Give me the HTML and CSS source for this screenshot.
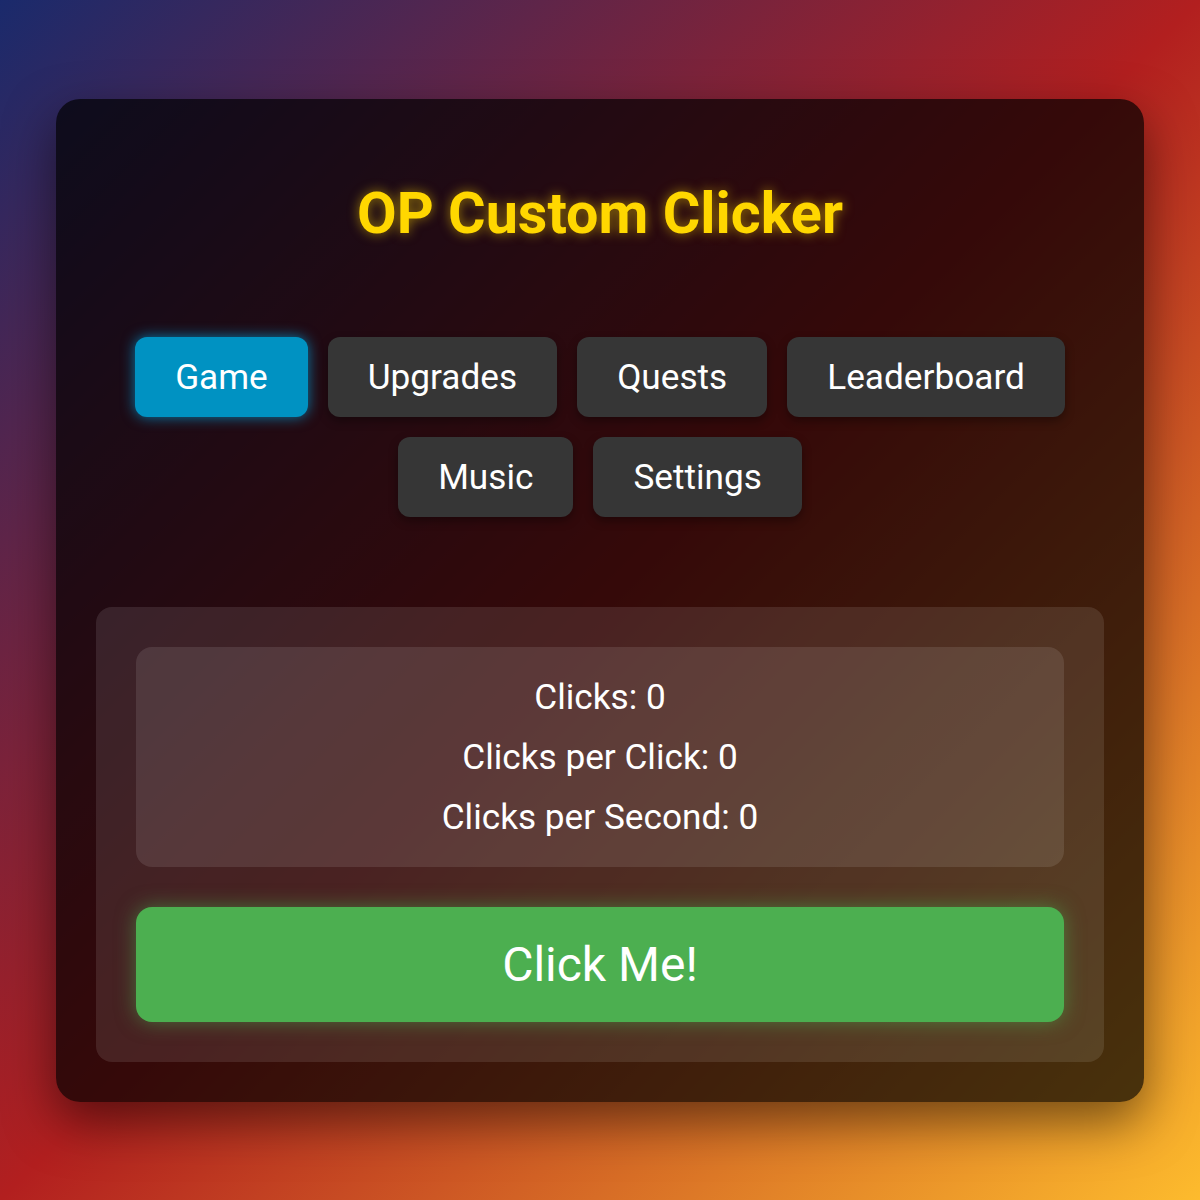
FILE: index.html
```html
<!DOCTYPE html>
<html lang="en">
<head>
<meta charset="utf-8">
<title>OP Custom Clicker</title>
<link rel="stylesheet" href="styles.css">
</head>
<body>
  <main class="card">
    <h1 class="title">OP Custom Clicker</h1>
    <nav class="tabs">
      <button class="tab active">Game</button>
      <button class="tab">Upgrades</button>
      <button class="tab">Quests</button>
      <button class="tab">Leaderboard</button>
      <button class="tab">Music</button>
      <button class="tab">Settings</button>
    </nav>
    <section class="panel">
      <div class="stats">
        <p class="stat">Clicks: 0</p>
        <p class="stat">Clicks per Click: 0</p>
        <p class="stat">Clicks per Second: 0</p>
      </div>
      <button class="click-btn">Click Me!</button>
    </section>
  </main>
</body>
</html>
```
FILE: styles.css
```css
* { box-sizing: border-box; }
html, body { height: 100%; }
body {
  margin: 0;
  min-height: 1200px;
  font-family: Roboto, "Liberation Sans", sans-serif;
  color: #fff;
  background: linear-gradient(135deg, #1a2a6c 0%, #b21f1f 50%, #fdbb2d 100%);
  display: flex;
  align-items: center;
  justify-content: center;
}
.card {
  width: 1088px;
  padding: 40px;
  border-radius: 24px;
  background: rgba(0, 0, 0, 0.7);
  box-shadow: 0 20px 50px rgba(0, 0, 0, 0.5);
  text-align: center;
}
.title {
  margin: 42px 0 0;
  font-size: 57.5px;
  font-weight: 700;
  line-height: 66px;
  color: #ffd700;
  text-shadow: 0 0 12px rgba(255, 215, 0, 0.55);
}
.tabs {
  margin: 90px 0 0;
  display: flex;
  flex-wrap: wrap;
  justify-content: center;
  gap: 20px;
}
.tab {
  font-family: inherit;
  font-size: 35.2px;
  line-height: 40px;
  padding: 20px 40px;
  border: none;
  border-radius: 12px;
  color: #fff;
  background: #363636;
  box-shadow: 0 4px 10px rgba(0, 0, 0, 0.35);
}
.tab.active {
  background: #0092c2;
  box-shadow: 0 0 14px rgba(0, 160, 220, 0.75);
}
.panel {
  margin-top: 90px;
  padding: 40px;
  border-radius: 16px;
  background: rgba(255, 255, 255, 0.1);
  display: flex;
  flex-direction: column;
  gap: 40px;
}
.stats {
  padding: 20px;
  border-radius: 16px;
  background: rgba(255, 255, 255, 0.1);
}
.stat {
  margin: 0;
  font-size: 35.2px;
  line-height: 60px;
}
.click-btn {
  font-family: inherit;
  font-size: 48px;
  line-height: 55px;
  padding: 30px;
  border: none;
  border-radius: 16px;
  color: #fff;
  background: #4caf50;
  box-shadow: 0 0 20px rgba(76, 175, 80, 0.55);
}
```
